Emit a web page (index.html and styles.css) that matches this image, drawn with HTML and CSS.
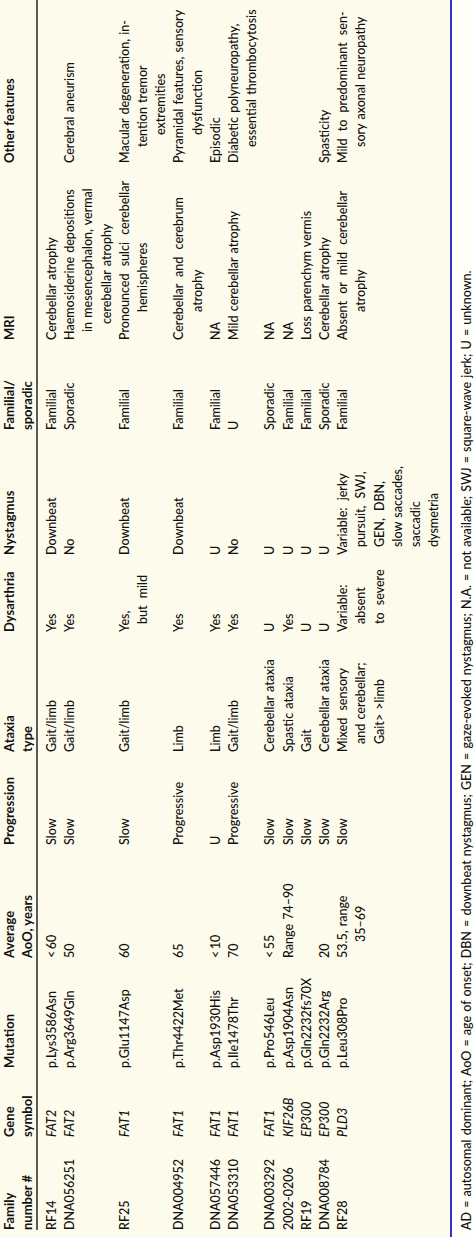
FILE: index.html
```html
<!DOCTYPE html>
<html lang="en">
<head>
<meta charset="utf-8">
<title>Table</title>
<link rel="stylesheet" href="styles.css">
</head>
<body>
<div class="page">
  <div class="sheet">
    <div class="tablewrap">
      <table class="data">
        <colgroup>
          <col class="c-fam"><col class="c-gene"><col class="c-mut"><col class="c-aoo"><col class="c-prog"><col class="c-atax"><col class="c-dys"><col class="c-nys"><col class="c-famsp"><col class="c-mri"><col class="c-other">
        </colgroup>
        <thead>
          <tr>
            <th>Family<br>number #</th>
            <th>Gene<br>symbol</th>
            <th>Mutation</th>
            <th>Average<br>AoO, years</th>
            <th>Progression</th>
            <th>Ataxia<br>type</th>
            <th>Dysarthria</th>
            <th>Nystagmus</th>
            <th>Familial/<br>sporadic</th>
            <th>MRI</th>
            <th>Other features</th>
          </tr>
        </thead>
        <tbody>
          <tr class="first">
            <td>RF14</td><td><i>FAT2</i></td><td>p.Lys3586Asn</td><td>&lt;&#8201;60</td><td>Slow</td><td>Gait/limb</td><td>Yes</td><td>Downbeat</td><td>Familial</td><td>Cerebellar atrophy</td><td></td>
          </tr>
          <tr>
            <td>DNA056251</td><td><i>FAT2</i></td><td>p.Arg3649Gln</td><td>50</td><td>Slow</td><td>Gait/limb</td><td>Yes</td><td>No</td><td>Sporadic</td>
            <td>Haemosiderine depositions<span class="ln i1">in mesencephalon, vermal</span><span class="ln i2">cerebellar atrophy</span></td>
            <td>Cerebral aneurism</td>
          </tr>
          <tr>
            <td>RF25</td><td><i>FAT1</i></td><td>p.Glu1147Asp</td><td>60</td><td>Slow</td><td>Gait/limb</td>
            <td>Yes,<span class="ln i1 wide">but mild</span></td>
            <td>Downbeat</td><td>Familial</td>
            <td><span class="wide">Pronounced sulci cerebellar</span><span class="ln i3">hemispheres</span></td>
            <td>Macular degeneration, in-<span class="ln i2">tention tremor</span><span class="ln i3">extremities</span></td>
          </tr>
          <tr>
            <td>DNA004952</td><td><i>FAT1</i></td><td>p.Thr4422Met</td><td>65</td><td>Progressive</td><td>Limb</td><td>Yes</td><td>Downbeat</td><td>Familial</td>
            <td><span class="wide">Cerebellar and cerebrum</span><span class="ln i3">atrophy</span></td>
            <td>Pyramidal features, sensory<span class="ln i3">dysfunction</span></td>
          </tr>
          <tr>
            <td>DNA057446</td><td><i>FAT1</i></td><td>p.Asp1930His</td><td>&lt;&#8201;10</td><td>U</td><td>Limb</td><td>Yes</td><td>U</td><td>Familial</td><td>NA</td><td>Episodic</td>
          </tr>
          <tr>
            <td>DNA053310</td><td><i>FAT1</i></td><td>p.Ile1478Thr</td><td>70</td><td>Progressive</td><td>Gait/limb</td><td>Yes</td><td>No</td><td>U</td><td>Mild cerebellar atrophy</td>
            <td>Diabetic polyneuropathy,<span class="ln i2">essential thrombocytosis</span></td>
          </tr>
          <tr>
            <td>DNA003292</td><td><i>FAT1</i></td><td>p.Pro546Leu</td><td>&lt;&#8201;55</td><td>Slow</td><td class="wide">Cerebellar ataxia</td><td>U</td><td>U</td><td>Sporadic</td><td>NA</td><td></td>
          </tr>
          <tr>
            <td>2002-0206</td><td><i>KIF26B</i></td><td>p.Asp1904Asn</td><td class="wide">Range 74–90</td><td>Slow</td><td class="wide">Spastic ataxia</td><td>Yes</td><td>U</td><td>Familial</td><td>NA</td><td></td>
          </tr>
          <tr>
            <td>RF19</td><td><i>EP300</i></td><td>p.Gln2232fs70X</td><td></td><td>Slow</td><td>Gait</td><td>U</td><td>U</td><td>Familial</td><td>Loss parenchym vermis</td><td></td>
          </tr>
          <tr>
            <td>DNA008784</td><td><i>EP300</i></td><td>p.Gln2232Arg</td><td>20</td><td>Slow</td><td class="wide">Cerebellar ataxia</td><td>U</td><td>U</td><td>Sporadic</td><td>Cerebellar atrophy</td><td>Spasticity</td>
          </tr>
          <tr class="last">
            <td>RF28</td><td><i>PLD3</i></td><td>p.Leu308Pro</td>
            <td>53.5, range<span class="ln i2">35–69</span></td>
            <td>Slow</td>
            <td><span class="wide">Mixed sensory</span><span class="ln i1">and cerebellar;</span><span class="ln i1">Gait&gt; &gt;limb</span></td>
            <td>Variable:<span class="ln i1">absent</span><span class="ln i1 wide">to severe</span></td>
            <td><span class="wide">Variable: jerky</span><span class="ln i1 wide">pursuit, SWJ,</span><span class="ln i1 wide">GEN, DBN,</span><span class="ln i1">slow saccades,</span><span class="ln i1">saccadic</span><span class="ln i1">dysmetria</span></td>
            <td>Familial</td>
            <td><span class="wide">Absent or mild cerebellar</span><span class="ln i3">atrophy</span></td>
            <td><span class="wide">Mild to predominant sen-</span><span class="ln i2">sory axonal neuropathy</span></td>
          </tr>
        </tbody>
      </table>
    </div>
    <p class="foot">AD = autosomal dominant; AoO = age of onset; DBN = downbeat nystagmus; GEN = gaze-evoked nystagmus; N.A. = not available; SWJ = square-wave jerk; U = unknown.</p>
  </div>
</div>
</body>
</html>
```

FILE: styles.css
```css
html, body {
  margin: 0;
  padding: 0;
  overflow: hidden;
  background: #fffef9;
}

.page {
  width: 474px;
  height: 1237px;
  overflow: hidden;
}

.sheet {
  width: 1237px;
  height: 474px;
  transform-origin: 0 0;
  transform: translateY(1237px) rotate(-90deg);
  font-family: "Lato", "Open Sans", "Liberation Sans", sans-serif;
  font-size: 12.5px;
  font-weight: 500;
  color: #111110;
  background: #fffef9;
}

.tablewrap {
  height: 450px;
  background: #fdfbec;
  border-bottom: 2px solid #3434c8;
  padding-left: 7px;
  overflow: hidden;
}

.data {
  width: 1230px;
  table-layout: fixed;
  border-collapse: collapse;
  border-spacing: 0;
}

.c-fam { width: 93px; }
.c-gene { width: 69px; }
.c-mut { width: 110px; }
.c-aoo { width: 113px; }
.c-prog { width: 93px; }
.c-atax { width: 120px; }
.c-dys { width: 77px; }
.c-nys { width: 125px; }
.c-famsp { width: 90px; }
.c-mri { width: 177px; }
.c-other { width: 163px; }

.data th {
  text-align: left;
  vertical-align: top;
  font-size: 13px;
  font-weight: 700;
  line-height: 18px;
  padding: 0;
  white-space: nowrap;
  border-bottom: 2px solid #5c5a53;
}

.data td {
  text-align: left;
  vertical-align: top;
  padding: 0;
  line-height: 18.2px;
  white-space: nowrap;
  word-spacing: 1px;
}

.data tr.first td {
  padding-top: 5px;
}

.ln {
  display: block;
}

.i1 { padding-left: 8px; }
.i2 { padding-left: 16px; }
.i3 { padding-left: 28px; }

.wide { word-spacing: 4px; }

.foot {
  margin: 0;
  padding: 6px 0 0 7px;
  line-height: 18px;
  white-space: nowrap;
  word-spacing: 1px;
}
```
